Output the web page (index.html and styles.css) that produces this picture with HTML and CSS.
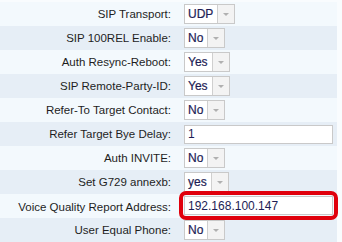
FILE: index.html
```html
<!DOCTYPE html>
<html lang="en">
<head>
    <meta charset="UTF-8">
    <title>SIP Settings</title>
    <link rel="stylesheet" href="styles.css">
</head>
<body>

<div class="settings">
    <div class="row">
        <label>SIP Transport:</label>
        <div class="value"><span class="select"><span class="opt">UDP</span><span class="arrow"></span></span></div>
    </div>
    <div class="row alt">
        <label>SIP 100REL Enable:</label>
        <div class="value"><span class="select"><span class="opt">No</span><span class="arrow"></span></span></div>
    </div>
    <div class="row">
        <label>Auth Resync-Reboot:</label>
        <div class="value"><span class="select"><span class="opt">Yes</span><span class="arrow"></span></span></div>
    </div>
    <div class="row alt">
        <label>SIP Remote-Party-ID:</label>
        <div class="value"><span class="select"><span class="opt">Yes</span><span class="arrow"></span></span></div>
    </div>
    <div class="row">
        <label>Refer-To Target Contact:</label>
        <div class="value"><span class="select"><span class="opt">No</span><span class="arrow"></span></span></div>
    </div>
    <div class="row alt">
        <label>Refer Target Bye Delay:</label>
        <div class="value"><input type="text" class="field" value="1"></div>
    </div>
    <div class="row">
        <label>Auth INVITE:</label>
        <div class="value"><span class="select"><span class="opt">No</span><span class="arrow"></span></span></div>
    </div>
    <div class="row alt">
        <label>Set G729 annexb:</label>
        <div class="value"><span class="select"><span class="opt">yes</span><span class="arrow"></span></span></div>
    </div>
    <div class="row">
        <label>Voice Quality Report Address:</label>
        <div class="value">
            <span class="highlight"><input type="text" class="field" value="192.168.100.147"></span>
        </div>
    </div>
    <div class="row alt">
        <label>User Equal Phone:</label>
        <div class="value"><span class="select"><span class="opt">No</span><span class="arrow"></span></span></div>
    </div>
</div>

</body>
</html>
```

FILE: styles.css
```css
body {
    margin: 0;
    padding: 2px 0 0 0;
    background-color: #f9fcfe;
    font-family: "Liberation Sans", Arial, sans-serif;
    font-size: 12px;
    color: #1e1e1e;
}

.settings {
    width: 337px;
    background-color: #f3f9fd;
}

.row {
    display: grid;
    grid-template-columns: 171px 1fr;
    column-gap: 13px;
    align-items: center;
    height: 24px;
    background-color: #f3f9fd;
}

.row.alt {
    background-color: #e6eef6;
}

.row label {
    font-size: 11.5px;
    text-align: right;
    white-space: nowrap;
}

.value {
    display: flex;
    align-items: center;
}

.select {
    display: inline-flex;
    height: 18px;
    border: 1px solid #c9c9c9;
    background-color: #fff;
}

.opt {
    display: flex;
    align-items: center;
    padding: 0 4px 0 3px;
    color: #1d1d55;
    border-right: 1px solid #cfcfcf;
    -webkit-text-stroke: 0.2px #1d1d55;
}

.arrow {
    width: 16px;
    background-color: #f3f3f3;
    position: relative;
}

.arrow::after {
    content: "";
    position: absolute;
    left: 5px;
    top: 8px;
    border-left: 3px solid transparent;
    border-right: 3px solid transparent;
    border-top: 3px solid #b0b0b0;
}

.field {
    box-sizing: border-box;
    width: 149px;
    height: 19px;
    margin: 0;
    padding: 0 3px;
    border: 1px solid #c9c9c9;
    background-color: #fff;
    font-family: "Liberation Sans", Arial, sans-serif;
    font-size: 12px;
    color: #1d1d55;
    outline: none;
}

.highlight {
    display: inline-flex;
    margin-left: -5px;
    margin-top: -3px;
    padding: 1px 1px;
    border: 4px solid #e0000c;
    border-radius: 7px;
}
```
